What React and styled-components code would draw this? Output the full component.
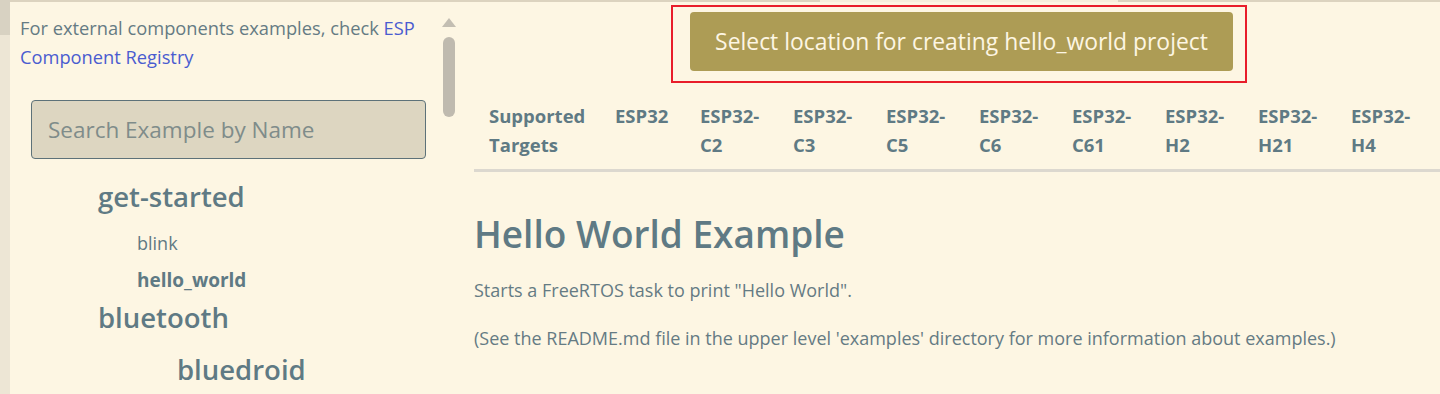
import React from "react";
import styled, { createGlobalStyle } from "styled-components";

const GlobalStyle = createGlobalStyle`
  html, body {
    margin: 0;
    padding: 0;
    background: #fdf6e3;
    overflow: hidden;
  }
  body {
    font-family: "Open Sans", "Noto Sans", sans-serif;
    color: #657b83;
  }
`;

const Page = styled.div`
  display: flex;
  width: 1440px;
  height: 394px;
  overflow: hidden;
`;

const Gutter = styled.div`
  width: 10px;
  flex: none;
  background: #ede6d5;
  display: flex;
  flex-direction: column;
`;

const GutterThumb = styled.div`
  height: 35px;
  background: #d8d2c2;
`;

const Content = styled.div`
  flex: 1;
  display: flex;
  flex-direction: column;
`;

const TopStrip = styled.div`
  display: flex;
  height: 2px;
  flex: none;
`;

const StripPart = styled.div`
  width: ${(p) => p.$w}px;
  flex: ${(p) => (p.$w ? "none" : "1")};
  background: ${(p) => (p.$dark ? "#dcd3bf" : "#f6efdc")};
`;

const Body = styled.div`
  flex: 1;
  display: flex;
`;

/* sidebar with example list */
const Sidebar = styled.aside`
  position: relative;
  width: 450px;
  flex: none;
  padding: 11px 0 0 10px;
  box-sizing: border-box;
`;

const Note = styled.p`
  margin: 0;
  width: 415px;
  font-size: 18.3px;
  line-height: 29px;
`;

const Link = styled.a`
  color: #4a5cd0;
  text-decoration: none;
`;

const Scroll = styled.div`
  position: absolute;
  top: 16px;
  right: 4px;
  width: 14px;
  display: flex;
  flex-direction: column;
  align-items: center;
  gap: 10px;
`;

const Arrow = styled.div`
  width: 0;
  height: 0;
  border-left: 7px solid transparent;
  border-right: 7px solid transparent;
  border-bottom: 9px solid #c3beb2;
`;

const Thumb = styled.div`
  width: 12px;
  height: 80px;
  border-radius: 6px;
  background: #bfbaaf;
`;

const Search = styled.input`
  display: block;
  margin: 29px 0 0 11px;
  width: 395px;
  height: 59px;
  box-sizing: border-box;
  padding: 0 16px;
  background: #ddd6c1;
  border: 1px solid #5d7279;
  border-radius: 4px;
  font-family: inherit;
  font-size: 22.5px;
  color: #657b83;
  outline: none;
  &::placeholder {
    color: #7f8c8a;
  }
`;

const Tree = styled.ul`
  list-style: none;
  margin: 19px 0 0;
  padding: 0;
`;

const Item = styled.li`
  padding-left: ${(p) => p.$indent}px;
  font-size: ${(p) => (p.$group ? "27.5px" : p.$active ? "19px" : "18px")};
  font-weight: ${(p) => (p.$group ? 600 : p.$active ? 700 : 400)};
  line-height: 37px;
  margin-bottom: ${(p) => p.$gap || 0}px;
  color: #5f7a84;
`;

/* main panel */
const Main = styled.main`
  flex: 1;
  padding: 3px 0 0 14px;
`;

const ButtonRow = styled.div`
  display: flex;
  justify-content: center;
`;

const Highlight = styled.div`
  border: 2px solid #e81d2a;
  padding: 5px 12px 10px 17px;
`;

const CreateButton = styled.button`
  height: 59px;
  padding: 0 25px;
  border: none;
  border-radius: 4px;
  background: #ad9c55;
  color: #fdf6e3;
  font-family: inherit;
  font-size: 22.9px;
  cursor: pointer;
`;

const Targets = styled.div`
  display: flex;
  margin-top: 18px;
  padding: 0 0 10px 15px;
  border-bottom: 3px solid #dcd8cf;
`;

const Target = styled.div`
  width: ${(p) => p.$w || 93}px;
  flex: none;
  font-size: 18.5px;
  font-weight: 700;
  line-height: 29px;
  color: #5f7a84;
`;

const Title = styled.h1`
  margin: 37px 0 0;
  font-size: 37px;
  font-weight: 600;
  line-height: 50px;
  color: #5f7a84;
`;

const Para = styled.p`
  margin: 0;
  margin-top: ${(p) => p.$top}px;
  font-size: 18px;
  line-height: 24px;
`;

const targets = ["ESP32", "ESP32-\nC2", "ESP32-\nC3", "ESP32-\nC5", "ESP32-\nC6", "ESP32-\nC61", "ESP32-\nH2", "ESP32-\nH21", "ESP32-\nH4"];

export default function App() {
  return (
    <>
      <GlobalStyle />
      <Page>
        <Gutter>
          <GutterThumb />
        </Gutter>
        <Content>
          <TopStrip>
            <StripPart $w={810} $dark />
            <StripPart $w={298} />
            <StripPart $dark />
          </TopStrip>
          <Body>
            <Sidebar>
              <Note>
                For external components examples, check{" "}
                <Link href="#">ESP Component Registry</Link>
              </Note>
              <Scroll>
                <Arrow />
                <Thumb />
              </Scroll>
              <Search placeholder="Search Example by Name" />
              <Tree>
                <Item $indent={78} $group $gap={10}>get-started</Item>
                <Item $indent={117}>blink</Item>
                <Item $indent={117} $active>hello_world</Item>
                <Item $indent={78} $group $gap={15}>bluetooth</Item>
                <Item $indent={157} $group>bluedroid</Item>
              </Tree>
            </Sidebar>
            <Main>
              <ButtonRow>
                <Highlight>
                  <CreateButton>Select location for creating hello_world project</CreateButton>
                </Highlight>
              </ButtonRow>
              <Targets>
                <Target $w={126}>
                  Supported
                  <br />
                  Targets
                </Target>
                {targets.map((t, idx) => (
                  <Target key={t} $w={idx === 0 ? 85 : 93}>
                    {t.split("\n").map((part, i) => (
                      <React.Fragment key={i}>
                        {i > 0 && <br />}
                        {part}
                      </React.Fragment>
                    ))}
                  </Target>
                ))}
              </Targets>
              <Title>Hello World Example</Title>
              <Para $top={19}>Starts a FreeRTOS task to print "Hello World".</Para>
              <Para $top={24}>
                (See the README.md file in the upper level 'examples' directory for more information about examples.)
              </Para>
            </Main>
          </Body>
        </Content>
      </Page>
    </>
  );
}
